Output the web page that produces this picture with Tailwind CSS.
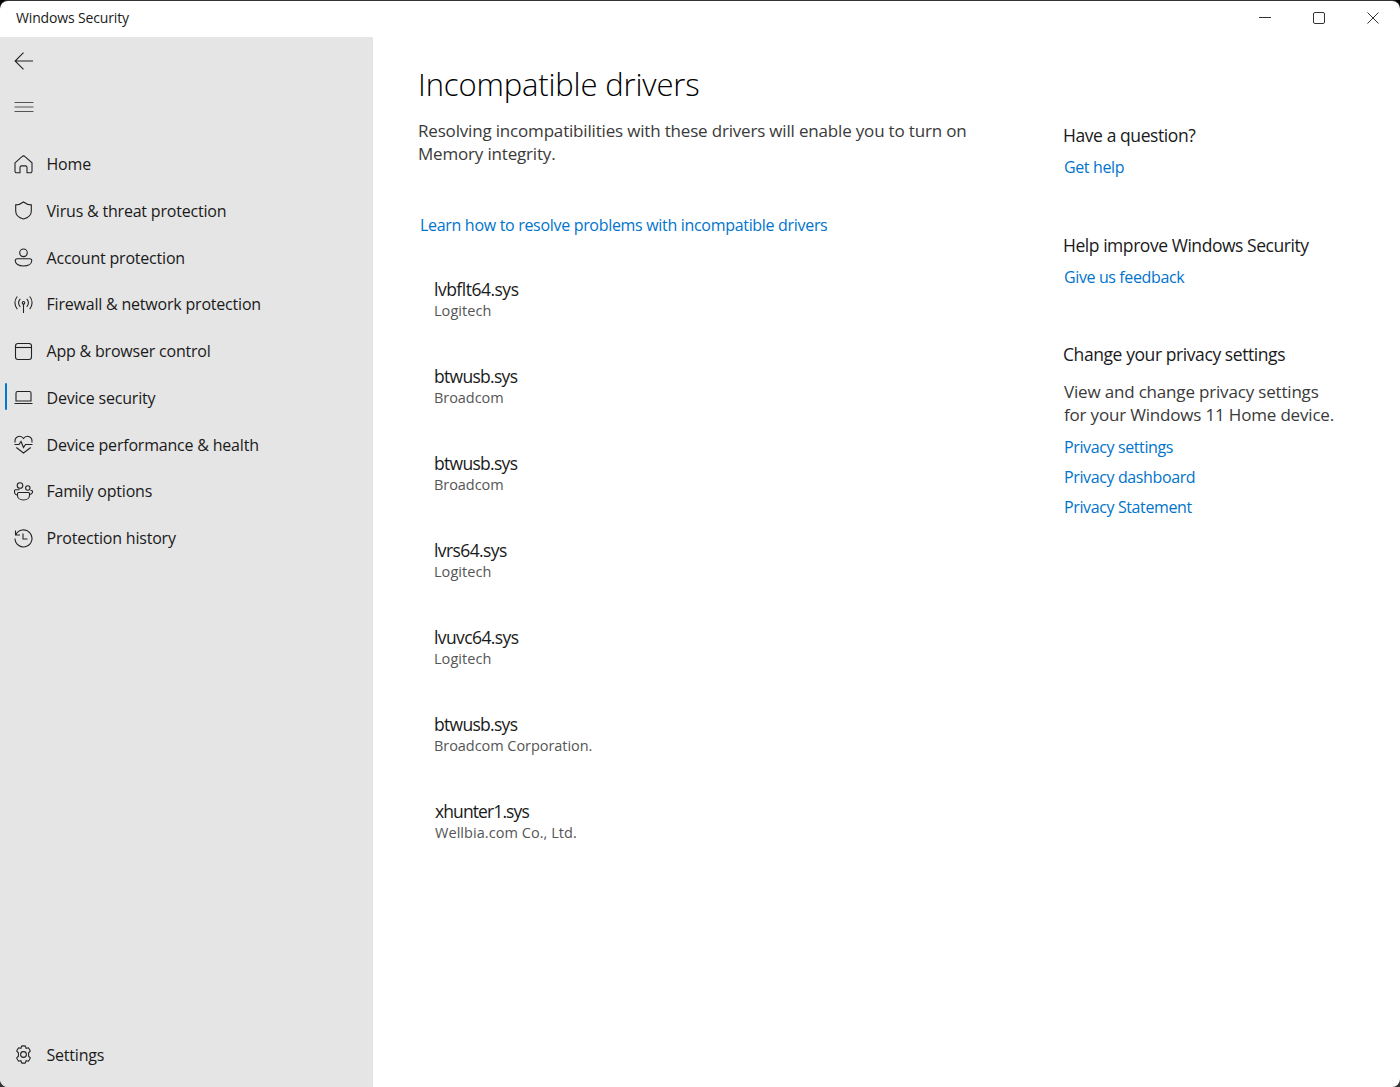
<!DOCTYPE html>
<html lang="en">

<head>
    <meta charset="UTF-8">
    <script src="https://cdn.jsdelivr.net/npm/@tailwindcss/browser@4"></script>
    <title>Windows Security</title>
</head>

<body class="bg-black">
    <div class="w-[1400px] h-[1087px] pt-px overflow-hidden bg-[#333333] rounded-t-[8px]">
    <div class="h-[1086px] flex flex-col bg-white rounded-[8px] overflow-hidden font-['Open_Sans','Noto_Sans',sans-serif] text-[#1a1a1a]">
        <!-- title bar -->
        <div class="h-[36px] shrink-0 flex items-center justify-between">
            <span class="pl-[16px] pb-[3px] text-[14px] tracking-[-0.15px]">Windows Security</span>
            <div class="flex items-center pr-px pb-[2px]">
                <button class="w-[54px] h-[34px] flex items-center justify-center">
                    <svg width="12" height="12" viewBox="0 0 12 12" fill="none" stroke="#333" stroke-width="1"><path d="M0 5.5h12" /></svg>
                </button>
                <button class="w-[54px] h-[34px] flex items-center justify-center">
                    <svg width="12" height="12" viewBox="0 0 12 12" fill="none" stroke="#333" stroke-width="1"><rect x="0.5" y="0.5" width="11" height="11" rx="1.5" /></svg>
                </button>
                <button class="w-[53px] h-[34px] flex items-center justify-center">
                    <svg width="12" height="12" viewBox="0 0 12 12" fill="none" stroke="#333" stroke-width="1"><path d="M0.5 0.5l11 11M11.5 0.5l-11 11" /></svg>
                </button>
            </div>
        </div>

        <div class="flex-1 flex min-h-0">
            <!-- sidebar -->
            <nav class="w-[373px] shrink-0 bg-[#e5e5e5] flex flex-col justify-between text-[16px] tracking-[-0.2px]">
                <div>
                    <div class="h-[47px] pl-[13.500px] flex items-center">
                        <svg width="20" height="20" viewBox="0 0 20 20" fill="none" stroke="#222" stroke-width="1.1"><path d="M19 10H1.2M9.5 1.6L1.1 10l8.4 8.4" /></svg>
                    </div>
                    <div class="h-[46px] pl-[13.500px] flex items-center">
                        <svg width="20" height="20" viewBox="0 0 20 20" fill="none" stroke="#555" stroke-width="1"><path d="M0.5 5.5h19M0.5 10h19M0.5 14.500h19" /></svg>
                    </div>
                    <div class="h-[10.750px]"></div>

                    <div class="h-[46.750px] flex items-center">
                        <span class="w-[14px]"></span>
                        <svg class="w-[19px] h-[19px] mr-[13.500px]" viewBox="0 0 19 19" fill="none" stroke="#222" stroke-width="1.1"><path d="M1 7.8L8 1.6a2.2 2.2 0 0 1 3 0l7 6.2v8.4a1.6 1.6 0 0 1-1.600 1.600h-3.400v-5.400a1.500 1.500 0 0 0-1.500-1.500h-4a1.500 1.500 0 0 0-1.500 1.500v5.400h-3.400a1.600 1.600 0 0 1-1.600-1.600z" /></svg>
                        <span>Home</span>
                    </div>
                    <div class="h-[46.750px] flex items-center">
                        <span class="w-[14px]"></span>
                        <svg class="w-[19px] h-[19px] mr-[13.500px]" viewBox="0 0 19 19" fill="none" stroke="#222" stroke-width="1.1"><path d="M9.500 1c2.400 1.900 4.900 2.800 7.800 2.900v6.100c0 3.900-2.600 6.600-7.800 8-5.200-1.400-7.800-4.100-7.800-8V3.900C4.600 3.800 7.100 2.900 9.500 1z" /></svg>
                        <span>Virus &amp; threat protection</span>
                    </div>
                    <div class="h-[46.750px] flex items-center">
                        <span class="w-[14px]"></span>
                        <svg class="w-[19px] h-[19px] mr-[13.500px]" viewBox="0 0 19 19" fill="none" stroke="#222" stroke-width="1.1"><circle cx="9.500" cy="4.800" r="3.800" /><path d="M3 10.800h13a1.800 1.800 0 0 1 1.800 1.800c0 3.300-3.400 5.400-8.300 5.400s-8.300-2.100-8.300-5.400a1.800 1.800 0 0 1 1.800-1.800z" /></svg>
                        <span>Account protection</span>
                    </div>
                    <div class="h-[46.750px] flex items-center">
                        <span class="w-[14px]"></span>
                        <svg class="w-[19px] h-[19px] mr-[13.500px]" viewBox="0 0 19 19" fill="none" stroke="#222" stroke-width="1.1"><circle cx="9.500" cy="7.800" r="1.300" /><path d="M9.500 9v9M6.300 3.800a5.500 5.500 0 0 0 0 8M12.700 3.800a5.500 5.500 0 0 1 0 8M3.300 1.500a9.500 9.500 0 0 0 0 12.600M15.700 1.500a9.500 9.500 0 0 1 0 12.600" /></svg>
                        <span>Firewall &amp; network protection</span>
                    </div>
                    <div class="h-[46.750px] flex items-center">
                        <span class="w-[14px]"></span>
                        <svg class="w-[19px] h-[19px] mr-[13.500px]" viewBox="0 0 19 19" fill="none" stroke="#222" stroke-width="1.1"><rect x="1.500" y="1.500" width="16" height="16" rx="2.500" /><path d="M1.500 5.500h16" /></svg>
                        <span>App &amp; browser control</span>
                    </div>
                    <div class="h-[46.750px] flex items-center relative">
                        <span class="absolute left-[5px] top-[8px] w-[2px] h-[27px] rounded-full bg-[#0078d4]"></span>
                        <span class="w-[14px]"></span>
                        <svg class="w-[19px] h-[19px] mr-[13.500px]" viewBox="0 0 19 19" fill="none" stroke="#222" stroke-width="1.1"><path d="M2 13V5a1.500 1.500 0 0 1 1.500-1.500h12A1.500 1.500 0 0 1 17 5v8zM0.500 15.500h18" /></svg>
                        <span>Device security</span>
                    </div>
                    <div class="h-[46.750px] flex items-center">
                        <span class="w-[14px]"></span>
                        <svg class="w-[19px] h-[19px] mr-[13.500px]" viewBox="0 0 19 19" fill="none" stroke="#222" stroke-width="1.1"><path d="M0.500 9.500h4.500l2-3 2.500 6 2-3h7M2.300 12.500L9.500 18l7.200-5.500M1.200 7.500C0.200 3.700 3 1.200 5.500 1.200c1.800 0 3.100 0.900 4 2.300 0.900-1.400 2.200-2.300 4-2.300 2.500 0 5.300 2.500 4.300 6.300" /></svg>
                        <span>Device performance &amp; health</span>
                    </div>
                    <div class="h-[46.750px] flex items-center">
                        <span class="w-[14px]"></span>
                        <svg class="w-[19px] h-[19px] mr-[13.500px]" viewBox="0 0 19 19" fill="none" stroke="#222" stroke-width="1.1"><circle cx="6" cy="3.500" r="2.800" /><circle cx="13.800" cy="6" r="2.200" /><path d="M4.500 10.500h10a1 1 0 0 1 1 1v2c0 2.500-2.500 4.500-6 4.500s-6-2-6-4.500v-2a1 1 0 0 1 1-1zM3 13c-1.500-0.300-2.500-1.400-2.500-3V8.800a1 1 0 0 1 1-1h4M16 12.500c1.500-0.400 2.500-1.300 2.500-2.500v-0.500a1 1 0 0 0-1-1h-1" /></svg>
                        <span>Family options</span>
                    </div>
                    <div class="h-[46.750px] flex items-center">
                        <span class="w-[14px]"></span>
                        <svg class="w-[19px] h-[19px] mr-[13.500px]" viewBox="0 0 19 19" fill="none" stroke="#222" stroke-width="1.1"><path d="M1.500 1.500v4.500H6M1.800 5.800A8.500 8.500 0 1 1 1 9.500M9 4.500v5.500h4.500" /></svg>
                        <span>Protection history</span>
                    </div>
                </div>
                <div class="h-[47px] mb-[9px] flex items-center">
                    <span class="w-[14px]"></span>
                    <svg class="w-[19px] h-[19px] mr-[13.500px]" viewBox="0 0 19 19" fill="none" stroke="#222" stroke-width="1.1"><circle cx="9.500" cy="9.500" r="2.900" /><path d="M7.600 1.100a8.600 8.600 0 0 1 3.800 0l0.700 2.300 2.300-0.600a8.600 8.600 0 0 1 1.900 3.300l-1.700 1.700 0 3.400 1.700 1.700a8.600 8.600 0 0 1-1.900 3.300l-2.300-0.600-0.700 2.300a8.600 8.600 0 0 1-3.800 0l-0.700-2.300-2.300 0.600a8.600 8.600 0 0 1-1.900-3.300l1.700-1.700 0-3.400-1.700-1.700a8.600 8.600 0 0 1 1.900-3.300l2.300 0.600z" /></svg>
                    <span>Settings</span>
                </div>
            </nav>

            <!-- main -->
            <main class="flex-1 flex min-w-0">
                <div class="w-[689px] shrink-0 pl-[45px]">
                    <h1 class="mt-[26px] text-[31px] leading-[42px] font-light tracking-[-0.15px] text-black">Incompatible drivers</h1>
                    <p class="mt-[14px] w-[560px] text-[17px] leading-[23px] text-[#3a3a3a] tracking-[-0.18px]">Resolving incompatibilities with these drivers will enable you to turn on Memory integrity.</p>
                    <a class="block mt-[48px] ml-[2px] text-[16px] leading-[24px] text-[#0074cc] tracking-[-0.31px]">Learn how to resolve problems with incompatible drivers</a>

                    <ul class="mt-[40px] ml-[16px]">
                        <li class="h-[87px]">
                            <div class="text-[17.500px] leading-[24px] tracking-[-0.5px]">lvbflt64.sys</div>
                            <div class="text-[14.500px] leading-[20px] text-[#555555] tracking-[0.05px]">Logitech</div>
                        </li>
                        <li class="h-[87px]">
                            <div class="text-[17.500px] leading-[24px] tracking-[-0.7px]">btwusb.sys</div>
                            <div class="text-[14.500px] leading-[20px] text-[#555555] tracking-[-0.05px]">Broadcom</div>
                        </li>
                        <li class="h-[87px]">
                            <div class="text-[17.500px] leading-[24px] tracking-[-0.7px]">btwusb.sys</div>
                            <div class="text-[14.500px] leading-[20px] text-[#555555] tracking-[-0.05px]">Broadcom</div>
                        </li>
                        <li class="h-[87px]">
                            <div class="text-[17.500px] leading-[24px] tracking-[-0.6px]">lvrs64.sys</div>
                            <div class="text-[14.500px] leading-[20px] text-[#555555] tracking-[0.05px]">Logitech</div>
                        </li>
                        <li class="h-[87px]">
                            <div class="text-[17.500px] leading-[24px] tracking-[-0.6px]">lvuvc64.sys</div>
                            <div class="text-[14.500px] leading-[20px] text-[#555555] tracking-[0.05px]">Logitech</div>
                        </li>
                        <li class="h-[87px]">
                            <div class="text-[17.500px] leading-[24px] tracking-[-0.7px]">btwusb.sys</div>
                            <div class="text-[14.500px] leading-[20px] text-[#555555] tracking-[-0.05px]">Broadcom Corporation.</div>
                        </li>
                        <li class="h-[87px]">
                            <div class="text-[17.500px] leading-[24px] tracking-[-0.9px] ml-px">xhunter1.sys</div>
                            <div class="text-[14.500px] leading-[20px] text-[#555555] tracking-[0.05px] ml-px">Wellbia.com Co., Ltd.</div>
                        </li>
                    </ul>
                </div>

                <!-- right column -->
                <aside class="pl-[1px] pt-[86px] text-[16px] text-[#0074cc] tracking-[-0.38px]">
                    <h2 class="text-[17.500px] leading-[24px] text-[#1a1a1a] tracking-[-0.42px]">Have a question?</h2>
                    <a class="block mt-[8px] ml-px leading-[24px]">Get help</a>

                    <h2 class="mt-[54px] text-[17.500px] leading-[24px] text-[#1a1a1a] tracking-[-0.45px]">Help improve Windows Security</h2>
                    <a class="block mt-[8px] ml-px leading-[24px]">Give us feedback</a>

                    <h2 class="mt-[53px] text-[17.500px] leading-[24px] text-[#1a1a1a] tracking-[-0.42px]">Change your privacy settings</h2>
                    <p class="mt-[14px] ml-px w-[275px] text-[17px] leading-[23px] text-[#3a3a3a] tracking-[-0.18px]">View and change privacy settings for your Windows 11 Home device.</p>
                    <a class="block mt-[9px] ml-px leading-[24px]">Privacy settings</a>
                    <a class="block mt-[6px] ml-px leading-[24px]">Privacy dashboard</a>
                    <a class="block mt-[6px] ml-px leading-[24px]">Privacy Statement</a>
                </aside>
            </main>
        </div>
    </div>
    </div>
</body>

</html>
